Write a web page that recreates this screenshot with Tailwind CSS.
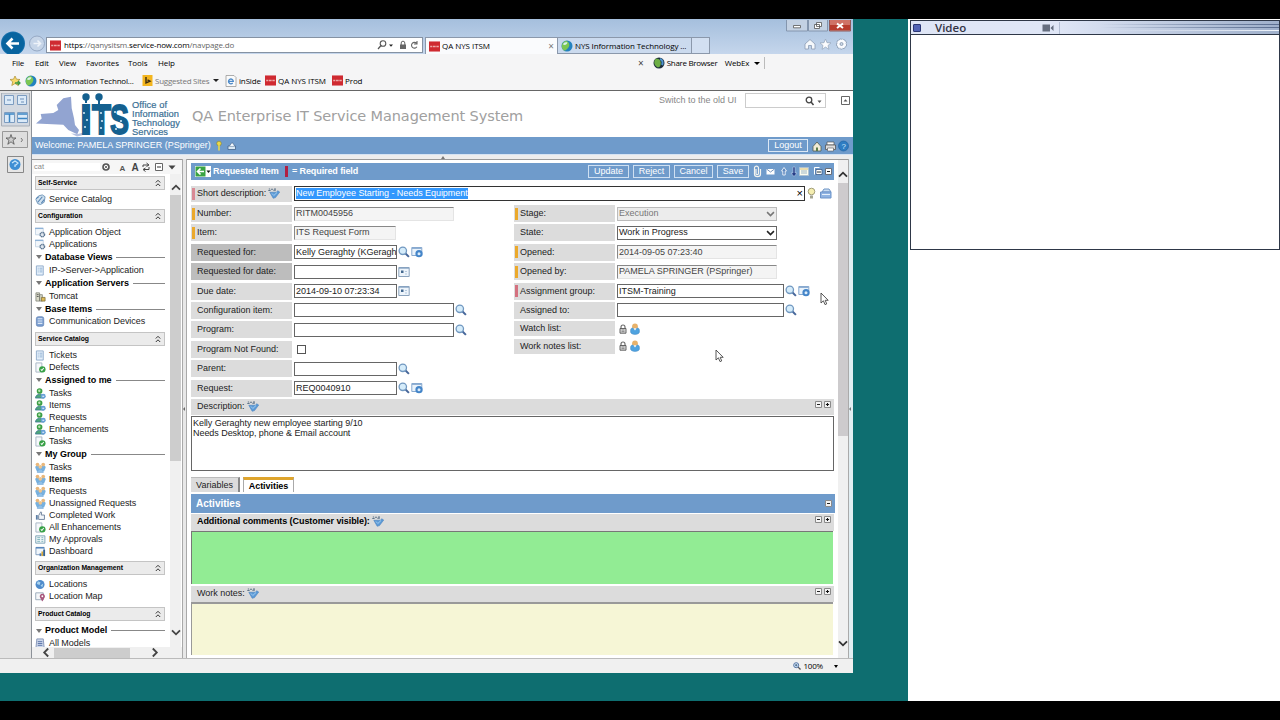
<!DOCTYPE html>
<html lang="en">
<head>
  <meta charset="UTF-8" />
  <meta name="viewport" content="width=device-width, initial-scale=1.0" />
  <title>QA NYS ITSM</title>
  <script src="https://cdn.jsdelivr.net/npm/@tailwindcss/browser@4"></script>
</head>
<body class="w-[1280px] h-[720px] overflow-hidden bg-black font-['Liberation_Sans',sans-serif] text-[9px] leading-none text-[#222]">

  <!-- icon sprite -->
  <svg class="hidden">
    <symbol id="mag" viewBox="0 0 12 12"><path d="M7.3 7.3l3.6 3.6" stroke="#47679a" stroke-width="2"/><circle cx="4.8" cy="4.8" r="3.7" fill="#d5ecfa" stroke="#7198c0" stroke-width="1.3"/></symbol>
    <symbol id="ref" viewBox="0 0 12 12"><path d="M.8 1.5h10v8H.8z" fill="#eaf3fb" stroke="#87a9cf"/><path d="M1 2.2h9.6" stroke="#87a9cf" stroke-width="1.4"/><circle cx="8" cy="7.7" r="3.6" fill="#4485c9"/><circle cx="8" cy="7.7" r="1.5" fill="#dcecfa"/></symbol>
    <symbol id="cal" viewBox="0 0 12 11"><path d="M.8 1h10.4v9H.8z" fill="#edf4fb" stroke="#8ba3bd"/><path d="M1 1.5h10" stroke="#86a2c2" stroke-width="1.4"/><path d="M3 4h2.5v2.5H3z" fill="#43688f"/><path d="M7 5h2M7 7.5h2" stroke="#b4c8dd"/></symbol>
    <symbol id="lock" viewBox="0 0 8 10"><path d="M2 4.5V3a2 2 0 0 1 4 0v1.5" fill="none" stroke="#666" stroke-width="1.1"/><path d="M1 4.5h6v4.7H1z" fill="#ddd" stroke="#555" stroke-width=".9"/><path d="M2.5 6h3M2.5 7.6h3" stroke="#666" stroke-width=".7"/></symbol>
    <symbol id="user" viewBox="0 0 10 12"><circle cx="5" cy="3.4" r="2.900" fill="#e8b26a"/><path d="M.6 7.2C.6 5.400 2 4.800 3 5l2 2 2-2c1-.2 2.400.4 2.400 2.200v1.800c0 3.200-8.800 3.200-8.800 0z" fill="#4fa3e0" stroke="#3f86c0" stroke-width=".5"/><path d="M3.400 5.300L5 7.600l1.600-2.300z" fill="#eef6fc"/></symbol>
    <symbol id="spell" viewBox="0 0 12 11"><path d="M.3 2.500h2.300M2.800 1.300h2.200M5.300 2.300h2.500M.8 1h1.200M6 1h2" stroke="#5f7489" stroke-width="1.100"/><path d="M1.800 4.300L5.200 10.300 7.500 9.600 11.700 4 9.800 2.800 8.300 4.200z" fill="#5b9ad6" stroke="#4a83c0" stroke-width=".6"/><path d="M4 5.500l1.800 2L9 4.500" fill="none" stroke="#a9d0f0" stroke-width=".9"/></symbol>
    <symbol id="globe" viewBox="0 0 12 12"><circle cx="6" cy="6" r="5.500" fill="#2382bf"/><path d="M5 .8C9 2 9 6 7 8s-3 2.800-4 2.500C-.5 8 0 2.500 5 .8z" fill="#7cc653"/><path d="M2 4.500C2.500 2.500 4.500 1.800 6.500 2.500 6 4.500 4 5.500 2 4.500z" fill="#d9f2ea"/></symbol>
    <symbol id="up2" viewBox="0 0 6 8"><path d="M.8 3.500L3 1.300l2.200 2.200M.8 7L3 4.800 5.200 7" fill="none" stroke="#333" stroke-width="1"/></symbol>
    <symbol id="min" viewBox="0 0 7 7"><path d="M.5.5h6v6h-6z" fill="#f4f4f4" stroke="#8a8a8a"/><path d="M2 3.500h3" stroke="#222"/></symbol>
    <symbol id="plus" viewBox="0 0 7 7"><path d="M.5.5h6v6h-6z" fill="#f4f4f4" stroke="#8a8a8a"/><path d="M1.900 3.500h3.200M3.500 1.900v3.200" stroke="#111" stroke-width="1.100"/></symbol>
    <symbol id="chev" viewBox="0 0 10 7"><path d="M1 1.300l4 4 4-4" fill="none" stroke="currentColor" stroke-width="1.800"/></symbol>
    <symbol id="cursor" viewBox="0 0 9 14"><path d="M1 1v10l2.400-2.200L5 12.600l1.700-.7L5.200 8.300h3z" fill="#fff" stroke="#444" stroke-width=".9"/></symbol>
    <!-- navigator icons -->
    <symbol id="n-catalog" viewBox="0 0 12 12"><path d="M1 6l3-4 4-1 3 2-1 6-4 2.500-3-1z" fill="#cfe0ee" stroke="#6d94b8"/><path d="M3 9l5-6M1 5l3-2M7 10l3-4" stroke="#5583b3" stroke-width="1.200"/></symbol>
    <symbol id="n-app" viewBox="0 0 12 12"><path d="M.5 1.500h8.500v7H.5z" fill="#f2f6fa" stroke="#c3d2e2"/><path d="M0 1.500h9" stroke="#8fb3d8" stroke-width="1.500"/><circle cx="8" cy="8.300" r="2.400" fill="#dfe6ee" stroke="#5e7893" stroke-width="1.600" stroke-dasharray="1.400 .4"/></symbol>
    <symbol id="n-doc" viewBox="0 0 12 12"><path d="M1.500 1h7.500v10H1.500z" fill="#e4effa" stroke="#8eabca"/><path d="M3 3.500h1M5 3.500h3M3 5.500h1M5 5.500h3M3 7.500h1M5 7.500h3" stroke="#8fb0d2"/></symbol>
    <symbol id="n-server" viewBox="0 0 12 12"><path d="M1 2h4v9H1zM5 4h3v7H5z" fill="#d8d9c8" stroke="#777b70" stroke-width=".8"/><path d="M7 7h4v4H7z" fill="#dcb955" stroke="#7b6c3a" stroke-width=".8"/><path d="M2 4h2M2 6h2" stroke="#555"/></symbol>
    <symbol id="n-comm" viewBox="0 0 12 12"><rect x="1.500" y=".8" width="8" height="10.400" rx="2" fill="#7d9fd0" stroke="#5d7fb2" stroke-width=".8"/><path d="M3 3h5M3 5.500h5M3 8h5" stroke="#dce8f5" stroke-width="1.200"/></symbol>
    <symbol id="n-check" viewBox="0 0 12 12"><path d="M1 1h6.500v10H1z" fill="#f6f8fa" stroke="#a5b4c3"/><circle cx="8" cy="8" r="3.500" fill="#37a046"/><path d="M6.300 8l1.200 1.200 2-2.600" fill="none" stroke="#fff" stroke-width="1.100"/></symbol>
    <symbol id="n-person" viewBox="0 0 12 12"><circle cx="5" cy="3.300" r="3.100" fill="#3c9f46"/><path d="M.5 11c0-5.500 9-5.500 9 0z" fill="#4da67a" stroke="#3b7393" stroke-width=".8"/><circle cx="9" cy="9" r="2.700" fill="#67a0d7"/><path d="M8 9h2" stroke="#fff"/><circle cx="4.700" cy="3" r="1.300" fill="#b9e2b4"/></symbol>
    <symbol id="n-group" viewBox="0 0 12 12"><path d="M.3 6c0-3 5-2.500 5.500 0 .5-2.500 5.800-3 5.800 0L10 10H2z" fill="#77b1df"/><circle cx="2.700" cy="2.800" r="2" fill="#e9b77b"/><circle cx="9" cy="2.800" r="2" fill="#e9b77b"/><path d="M2.500 11.500c0-5 6.600-5 6.600 0z" fill="#8fc0e8" stroke="#5f98cc" stroke-width=".5"/><circle cx="5.800" cy="5.300" r="2" fill="#efc48d"/></symbol>
    <symbol id="n-thumb" viewBox="0 0 12 12"><path d="M1 5.500h2v5H1z" fill="#5d7fa6"/><path d="M4 10.300V6l2.300-4 1 .7L6.800 5.500h3.500v4.800z" fill="#f3f6fa" stroke="#5d7390" stroke-width=".9"/></symbol>
    <symbol id="n-form" viewBox="0 0 12 12"><path d="M.8 2h10v8H.8z" fill="#eef5f7" stroke="#7ba0b5"/><path d="M2.500 4h3M7 4h2M2.500 6h3M7 6h2M2.500 8h3M7 8h2" stroke="#7bb2ba"/></symbol>
    <symbol id="n-dash" viewBox="0 0 12 12"><path d="M1 1.500h9v8H1z" fill="#f1f6fb" stroke="#7f9cbd"/><path d="M1 2h9" stroke="#4f81ba" stroke-width="1.500"/><path d="M5 8h2v3H5z" fill="#4a77b8"/><path d="M7 6h2v5H7z" fill="#d7a93b"/><path d="M9 4h2v7H9z" fill="#326194"/></symbol>
    <symbol id="n-globe" viewBox="0 0 12 12"><circle cx="5.500" cy="6" r="4.900" fill="#4f8bcb"/><path d="M3 2.500l3 1-1 3-3-1zM6 7l3-2-1 4z" fill="#a9d3ee"/></symbol>
    <symbol id="n-map" viewBox="0 0 12 12"><path d="M.8 2H9v7.500H.8z" fill="#f5f7f9" stroke="#97a7b8"/><path d="M8 11.500L5.500 7a2.800 2.800 0 1 1 5 0z" fill="#a8577d"/><circle cx="8" cy="5.700" r="1" fill="#fff"/></symbol>
    <symbol id="n-model" viewBox="0 0 12 12"><path d="M2 1h7l1 10H1z" fill="#cdd7ea" stroke="#8494b6"/><path d="M3 4h5M3 6h5M3 8h5" stroke="#5671a6"/></symbol>
    <symbol id="chip" viewBox="0 0 12 12"><path d="M0 .5h12v11H0z" fill="#cf2a31"/><path d="M1.300 6h2.300M4.300 6h3M8 6h2.700" stroke="#eda9a9" stroke-width="1.800"/></symbol>
  </svg>

  <div class="flex h-[720px] flex-col py-[19px]">
    <div class="flex h-[682px]">

      <!-- shared desktop -->
      <div class="w-[908px] bg-[#0e6e70]">
        <div class="flex h-[654px] w-[853px] flex-col bg-[#f0f0f0] font-['Open_Sans',sans-serif] text-[8px]">

          <!-- title bar and tabs -->
          <div class="flex h-[35px] items-end bg-linear-to-b from-[#a5bfdd] to-[#c5d6ec]">
            <svg class="h-[26px] w-[46px]" viewBox="0 0 46 26"><circle cx="13" cy="15.500" r="12" fill="#1670ad"/><circle cx="13" cy="15.500" r="11" fill="#08649f"/><path d="M19 15.500H8M12.500 10.500l-5 5 5 5" fill="none" stroke="#fff" stroke-width="2.600"/><circle cx="37" cy="15.500" r="7.500" fill="#c6d5e8" stroke="#96a9c4"/><path d="M33.500 15.500h6.500M37.500 12.500l3 3-3 3" fill="none" stroke="#eef3f9" stroke-width="1.600"/></svg>
            <div class="mb-px flex h-[16px] w-[377px] items-center border border-[#8592a3] bg-white pl-[3px]">
              <svg class="size-[11px]"><use href="#chip"/></svg>
              <span class="ml-[3px] tracking-[-0.14px] whitespace-nowrap text-[#666]"><span class="text-black">https</span>://qanysitsm.<span class="text-black">service-now.com</span>/navpage.do</span>
              <svg class="mr-[3px] ml-auto h-[12px] w-[42px]" viewBox="0 0 42 12"><circle cx="6" cy="4.500" r="2.800" fill="none" stroke="#555" stroke-width="1.100"/><path d="M4 6.500L1 10" stroke="#555" stroke-width="1.200"/><path d="M12 5.500h4l-2 2.200z" fill="#222"/><path d="M23 5.500h6V10h-6z" fill="#666"/><path d="M24.200 6V4a1.800 1.800 0 0 1 3.600 0v2" fill="none" stroke="#666"/><path d="M39.500 4.200a2.900 2.900 0 1 0 .4 3.600M40 2v3h-3" fill="none" stroke="#666" stroke-width="1.100"/></svg>
            </div>
            <div class="ml-[2px] flex h-[17px] w-[133px] items-center border border-b-0 border-[#8b98ab] bg-[#fafbfd] pl-[3px] text-black">
              <svg class="size-[11px]"><use href="#chip"/></svg>
              <span class="ml-[2px] tracking-[-0.05px]">QA NYS ITSM</span>
              <span class="mr-[3px] ml-auto text-[10px] text-[#777]">×</span>
            </div>
            <div class="flex h-[17px] w-[134px] items-center border border-l-0 border-[#8b98ab] bg-[#cbdaee] pl-[3px] text-black">
              <svg class="size-[12px]"><use href="#globe"/></svg>
              <span class="ml-[2px] tracking-[-0.1px] whitespace-nowrap">NYS Information Technology ...</span>
            </div>
            <div class="h-[17px] w-[18px] border border-l-0 border-[#8b98ab] bg-[#d2dff1]"></div>
            <div class="ml-auto flex h-[35px] flex-col items-end justify-between">
              <svg class="mt-px h-[12px] w-[67px]" viewBox="0 0 67 12"><path d="M.5-2h21v13H.5z" fill="#c3d1e3" stroke="#8496ae"/><path d="M22.500-2h19v13h-19z" fill="#c3d1e3" stroke="#8496ae"/><path d="M43.500-2h21v13h-21z" fill="#cf7266" stroke="#8e5a5a"/><path d="M44 5h20v5H44z" fill="#b83c2e"/><path d="M7.500 5.500h7v2.300h-7z" fill="#fff" stroke="#555" stroke-width=".8"/><path d="M30.500 2.500h5v4h-5zM28.500 4.500h5v4h-5z" fill="#fff" stroke="#555" stroke-width=".8"/><path d="M51 3.500l6 4.500M57 3.500L51 8" stroke="#fff" stroke-width="2"/></svg>
              <svg class="mr-[5px] mb-[4px] h-[12px] w-[44px]" viewBox="0 0 44 12"><path d="M1 6l5-4.500L11 6v5H7.500V7.500h-3V11H1z" fill="#f5f8fb" stroke="#8a9bb2" stroke-width=".8"/><path d="M21.500 1l1.500 3.700 4 .2-3 2.600 1 3.800-3.500-2.200-3.500 2.200 1-3.800-3-2.600 4-.2z" fill="#fbfcfe" stroke="#93a3b8" stroke-width=".7"/><circle cx="37.500" cy="6" r="4" fill="#cbd8e8" stroke="#8494aa" stroke-width="2.800" stroke-dasharray="2.100 .6"/><circle cx="37.500" cy="6" r="4" fill="#fafcff" stroke="#fafcff" stroke-width="1.400" stroke-dasharray="1.900 .8"/><circle cx="37.500" cy="6" r="1.500" fill="#cbd8e8" stroke="#8494aa" stroke-width=".8"/></svg>
            </div>
          </div>

          <!-- menu and favorites -->
          <div class="flex h-[37px] flex-col border-b border-[#666] bg-[#f5f5f6] text-black">
            <div class="flex h-[18px] items-center whitespace-nowrap">
              <div class="flex w-[638px] pl-[12px] tracking-[-0.1px]">
                <span class="w-[23px]">File</span><span class="w-[24px]">Edit</span><span class="w-[27px]">View</span><span class="w-[42px]">Favorites</span><span class="w-[30px]">Tools</span><span>Help</span>
              </div>
              <span class="text-[10px] text-[#444]">×</span>
              <svg class="ml-[9px] size-[12px]" viewBox="0 0 12 12"><circle cx="6" cy="6" r="5.500" fill="#1c2d3c"/><path d="M3 1.500c4 0 6 3 4 8l-2 1C1 9 0 4 3 1.500z" fill="#6dae45"/><path d="M7 2c3 1 3 4 2 6" stroke="#4d93cf" stroke-width="2" fill="none"/></svg>
              <span class="ml-[2px] w-[58px] tracking-[-0.3px]">Share Browser</span>
              <span class="tracking-[-0.2px]">WebEx</span>
              <span class="ml-[5px] border-x-[3px] border-t-[3px] border-x-transparent border-t-black"></span>
              <span class="ml-[4px] h-[12px] w-px bg-[#bbb]"></span>
            </div>
            <div class="flex h-[17px] items-center whitespace-nowrap">
              <svg class="ml-[9px] size-[12px]" viewBox="0 0 12 12"><path d="M6 1l1.500 3.200 3.500.3-2.700 2.300.9 3.700L6 8.500l-3.200 2 .9-3.700L1 4.500l3.500-.3z" fill="#f8d96b" stroke="#a98c30" stroke-width=".7"/><path d="M6 8h5M9 6l2 2-2 2" stroke="#3d9942" stroke-width="1.300" fill="none"/></svg>
              <svg class="ml-[4px] size-[12px]"><use href="#globe"/></svg>
              <span class="ml-[2px] w-[103px] tracking-[-0.17px]">NYS Information Technol...</span>
              <svg class="size-[11px]" viewBox="0 0 11 11"><path d="M.5 0h10v11H.5z" fill="#f3b51e"/><path d="M4 2v6l4-1.800L5.500 4.800" stroke="#3c2c10" stroke-width="1.400" fill="none"/></svg>
              <span class="ml-[2px] w-[58px] tracking-[-0.25px] text-[#777]">Suggested Sites</span>
              <span class="border-x-[3px] border-t-[3px] border-x-transparent border-t-[#222]"></span>
              <svg class="ml-[6px] size-[12px]" viewBox="0 0 12 12"><path d="M1 .5h8l2 2v9H1z" fill="#fafafa" stroke="#999" stroke-width=".8"/><path d="M3.500 6.300h4.800A2.400 2.400 0 1 0 7.700 8" fill="none" stroke="#4c89c9" stroke-width="1.300"/></svg>
              <span class="ml-[2px] w-[26px] tracking-[-0.15px]">inSide</span>
              <svg class="size-[11px]"><use href="#chip"/></svg>
              <span class="ml-[2px] w-[54px] tracking-[-0.05px]">QA NYS ITSM</span>
              <svg class="size-[11px]"><use href="#chip"/></svg>
              <span class="ml-[2px] tracking-[-0.1px]">Prod</span>
            </div>
          </div>

          <div class="flex h-[567px] font-['Liberation_Sans',sans-serif] text-[9px]">
            <!-- side command bar -->
            <div class="w-[32px] border-r border-[#8d9299] bg-[#e4e4e4] pt-[2px]">
              <svg class="h-[86px] w-[31px]" viewBox="0 0 31 86"><path d="M1.500 0h28v33h-28z" fill="#d3d9e1" stroke="#a6adb6"/><g fill="#dbeaf8" stroke="#7c9cc0"><path d="M4.500 2.500h9v9h-9zM17.500 2.500h9v9h-9zM4.500 19.500h10v10h-10zM17.500 19.500h10v10h-10z"/></g><path d="M7 7h4M20 6h4M21 9h3" stroke="#6d8fb8"/><path d="M5 21h9M9.500 21v8M18 21h9M18 25.500h9" stroke="#3c86c4" stroke-width="1.500"/><path d="M2.500 38.500h25v16h-25z" fill="#dedede" stroke="#999"/><path d="M11 41.500l1.200 3.500h3.800l-3 2.300 1.200 4-3.200-2.500L7.800 51.300l1.200-4L6 45h3.800z" fill="#ccc" stroke="#444" stroke-width=".7"/><path d="M21 45l1.500 2-1.500 2" fill="none" stroke="#777"/><path d="M7.500 63.500h16v16h-16z" fill="#e6e6e6" stroke="#888"/><circle cx="15" cy="71.500" r="5.500" fill="#3f8fd4"/><path d="M12 70l3-2 3 2-2 2h-1v2" stroke="#cde8fb" stroke-width="1.200" fill="none"/></svg>
            </div>

            <!-- web page -->
            <div class="flex w-[821px] flex-col">
              <div class="flex h-[46px] bg-white">
                <svg class="h-[46px] w-[150px] overflow-visible" viewBox="0 0 150 46"><path d="M4 32.500L9.700 27.500 8.700 23 21.300 22 26.300 19 24.700 14 31.300 7.300 39 5.700 39.700 17.300 42 27.300 43 34 47 39 45.300 43.300 36.300 39 31.300 33.800z" fill="#92a4d1"/><path d="M39 42.500l7 .5 11-3-2 3-10 2.500z" fill="#b3c0e0"/><g font-family="Liberation Sans" font-weight="700" font-size="43" fill="#14608f" stroke="#14608f" stroke-width="1.800"><text x="48" y="42.500">I</text><text x="60" y="42.500" textLength="19" lengthAdjust="spacingAndGlyphs">T</text><text x="78" y="42.500" textLength="19" lengthAdjust="spacingAndGlyphs">S</text></g><circle cx="54" cy="6" r="3.700" fill="#14608f"/><circle cx="67" cy="6" r="3.700" fill="#14608f"/><path d="M67 6v8M54 6v6" stroke="#14608f" stroke-width="2"/><g fill="#cfe5f2"><circle cx="52" cy="22" r="1.100"/><circle cx="55" cy="29" r="1.100"/><circle cx="53" cy="36" r="1.100"/><circle cx="69" cy="22" r="1.100"/><circle cx="70" cy="30" r="1.100"/><circle cx="69" cy="37" r="1.100"/><circle cx="83" cy="21" r="1.100"/><circle cx="89" cy="30" r="1.100"/><circle cx="84" cy="38" r="1.100"/></g><g font-family="Liberation Sans" font-size="9.300" fill="#3a6f95" stroke="#3a6f95" stroke-width=".2"><text x="100" y="16.500" textLength="35">Office of</text><text x="100" y="25.500" textLength="47">Information</text><text x="100" y="34.500" textLength="48">Technology</text><text x="100" y="43.500" textLength="36">Services</text></g></svg>
                <h1 class="mt-[18px] ml-[10px] w-[400px] font-['DejaVu_Sans',sans-serif] text-[14.5px] tracking-[-0.1px] whitespace-nowrap text-[#a0a0a0]">QA Enterprise IT Service Management System</h1>
                <span class="mt-[5px] ml-[67px] w-[86px] whitespace-nowrap text-[#888]">Switch to the old UI</span>
                <div class="mt-[2px] flex h-[15px] w-[81px] items-center justify-end border border-[#ccc]">
                  <svg class="h-[10px] w-[22px]" viewBox="0 0 22 10"><circle cx="6" cy="4" r="2.800" fill="none" stroke="#444" stroke-width="1.300"/><path d="M8 6l2.500 3" stroke="#444" stroke-width="1.500"/><path d="M14.500 4.500h4l-2 2.500z" fill="#555"/></svg>
                </div>
                <svg class="mt-[5px] ml-[15px] size-[9px]" viewBox="0 0 9 9"><path d="M.5.5h8v8h-8z" fill="#fff" stroke="#666"/><path d="M2.500 5.500h4l-2-2.300z" fill="#555"/></svg>
              </div>

              <div class="flex h-[17px] items-center bg-[#6f9bcb] pl-[3px] text-white">
                <span class="whitespace-nowrap">Welcome: PAMELA SPRINGER (PSpringer)</span>
                <svg class="ml-[5px] h-[11px] w-[24px]" viewBox="0 0 24 11"><circle cx="3" cy="3.500" r="2.300" fill="#ead94c" stroke="#8d7f2a" stroke-width=".6"/><path d="M3 4v6.500" stroke="#ead94c" stroke-width="1.600"/><path d="M12 6h7.500v3.500H12z" fill="#d9e8f4" stroke="#42638c" stroke-width=".8"/><path d="M13.500 6l2-3h1.500l1.500 3" fill="#f0f6fb" stroke="#42638c" stroke-width=".6"/></svg>
                <span class="ml-auto flex h-[13px] w-[40px] items-center justify-center border border-[#dce8f5] text-[9px]">Logout</span>
                <svg class="mr-[4px] ml-[4px] h-[12px] w-[37px]" viewBox="0 0 37 12"><path d="M1 6.500L5 2l4 4.500V11H1z" fill="#f1ecd6" stroke="#515b50" stroke-width=".8"/><path d="M4 7.500h2V11H4z" fill="#5a7b49"/><path d="M15 2h7v3h-7z" fill="#fff" stroke="#555" stroke-width=".7"/><path d="M13.500 5h10v4.500h-10z" fill="#ddd" stroke="#555" stroke-width=".8"/><path d="M15.500 8h6v3h-6z" fill="#fff" stroke="#555" stroke-width=".6"/><circle cx="31.500" cy="6" r="5" fill="#2e7cc2" stroke="#1c5f9f" stroke-width=".6"/><text x="29.500" y="9" font-size="8" fill="#cfe8fb" font-family="Liberation Sans">?</text></svg>
              </div>
              <div class="flex h-[5px] justify-center border-t border-[#d5e3f3] bg-[#ededed]"><span class="mt-[1px] border-x-[2px] border-b-[3px] border-x-transparent border-b-[#777]"></span></div>

              <div class="flex h-[499px]">
                <!-- navigator -->
                <div class="flex w-[150px] flex-col border-t border-[#9a9a9a] bg-white">
                  <div class="flex h-[14px] items-center bg-[#f6f6f6] pl-[2px]">
                    <span class="w-[66px] bg-white text-[7.5px] text-[#888]">cat</span>
                    <svg class="h-[12px] w-[78px]" viewBox="0 0 78 12"><circle cx="6" cy="6" r="3" fill="none" stroke="#555" stroke-width="1.600"/><path d="M4.500 4.500l3 3M7.500 4.500l-3 3" stroke="#555" stroke-width=".8"/><text x="19.500" y="10" font-size="8" font-weight="700" fill="#555" font-family="Liberation Sans">A</text><text x="31.500" y="10" font-size="10" font-weight="700" fill="#444" font-family="Liberation Sans">A</text><path d="M43 6V4h5M46.500 2L49 4l-2.500 1.500M49 6v2.500h-5M45.500 7L43 8.500l2.500 2" fill="none" stroke="#444"/><path d="M55.500 2.500h7v7h-7z" fill="#fff" stroke="#666"/><path d="M57 6h4" stroke="#333"/><path d="M68.500 4.500h7l-3.500 4z" fill="#444"/></svg>
                  </div>
                  <div class="flex h-[473px]">
                    <div id="nav" class="w-[138px] overflow-hidden pt-[2px] pl-[3px] pr-[5px] whitespace-nowrap"></div>
                    <div class="flex w-[11px] flex-col items-center bg-[#f0f0f0] text-[#444]">
                      <svg class="mt-[10px] h-[7px] w-[10px] rotate-180"><use href="#chev"/></svg>
                      <div class="mt-[4px] h-[266px] w-full bg-[#cdcdcd]"></div>
                      <svg class="mt-auto mb-[11px] h-[7px] w-[10px]"><use href="#chev"/></svg>
                    </div>
                  </div>
                  <div class="flex h-[11px] items-center bg-[#f0f0f0] text-[#444]">
                    <svg class="ml-[9px] h-[7px] w-[10px] rotate-90"><use href="#chev"/></svg>
                    <div class="ml-[3px] h-[10px] w-[76px] bg-[#cdcdcd]"></div>
                    <svg class="ml-[20px] h-[7px] w-[10px] -rotate-90"><use href="#chev"/></svg>
                  </div>
                </div>

                <!-- splitter -->
                <div class="flex w-[5px] items-center border-x border-[#a9a9a9] bg-[#e8e8e8]"><span class="border-y-[2px] border-r-[2px] border-y-transparent border-r-[#666]"></span></div>

                <!-- form -->
                <div class="w-[651px] border-t border-[#9a9a9a] bg-white pt-[3px] pl-[4px]">
                  <div class="flex h-[17px] w-[643px] items-center bg-[#6f9bcb] pl-[4px] text-[9px] font-bold text-white">
                    <svg class="h-[11px] w-[16px]" viewBox="0 0 16 11"><path d="M0 0h16v11H0z" fill="#fff"/><path d="M.5.5h10v10H.5z" fill="#39a243"/><path d="M9 5.500H3M5.500 2.500l-3 3 3 3" stroke="#fff" stroke-width="1.700" fill="none"/><path d="M11.500 4.500h4l-2 2.500z" fill="#111"/></svg>
                    <span class="ml-[2px] w-[72px] tracking-[-0.1px]">Requested Item</span>
                    <span class="h-[11px] w-[3px] bg-[#b12043]"></span>
                    <span class="ml-[4px] tracking-[-0.1px]">= Required field</span>
                    <div class="ml-auto flex items-center gap-[4px] text-[9px] font-normal">
                      <span class="flex h-[13px] w-[41px] items-center justify-center border border-[#cfe0f2]">Update</span>
                      <span class="flex h-[13px] w-[37px] items-center justify-center border border-[#cfe0f2]">Reject</span>
                      <span class="flex h-[13px] w-[39px] items-center justify-center border border-[#cfe0f2]">Cancel</span>
                      <span class="flex h-[13px] w-[32px] items-center justify-center border border-[#cfe0f2]">Save</span>
                    </div>
                    <svg class="ml-[2px] h-[13px] w-[83px]" viewBox="0 0 83 13"><path d="M5 4v4.500c0 1.500 2.500 1.500 2.500 0V3c0-2.500-4-2.500-4 0v6c0 3.500 6 3.500 6 0V4" fill="none" stroke="#f4f4ef" stroke-width="1.200"/><path d="M15.500 4h8v5.500h-8z" fill="#fff"/><path d="M15.500 4l4 3 4-3" fill="none" stroke="#7795bb"/><path d="M33 2.500L30.500 6h1.300v4h2.400V6h1.300z" fill="#5d87bf" stroke="#fff" stroke-width=".8"/><path d="M43 11.500L40 8h2V2h2v6h2z" fill="#253d87" stroke="#c8d8ee" stroke-width=".5"/><path d="M48.500 2.500h9v8h-9z" fill="#fbfbee" stroke="#adc1d2"/><path d="M49 4h8" stroke="#d9bf70"/><path d="M50 6h6M50 8h6" stroke="#9cb6c8"/><path d="M63.500 2.500h5M63.500 2.500v7" stroke="#fff"/><path d="M65 4.500h6v5h-6z" fill="#fff" stroke="#2f4f7d" stroke-width=".7"/><path d="M66 7h4" stroke="#233"/><path d="M74.500 3.500h6v6h-6z" fill="#fff" stroke="#6c6f78"/><path d="M76 6.500h3" stroke="#111"/></svg>
                  </div>

                  <!-- short description -->
                  <div class="mt-[5px] flex h-[17px] items-center">
                    <div class="mr-[2px] flex h-[16px] w-[101px] items-center bg-[#dcdcdc] pl-px"><span class="h-[12px] w-[3px] bg-[#d98a95]"></span><span class="ml-[2px] tracking-[-0.05px]">Short description:</span><svg class="ml-[2px] h-[11px] w-[12px]"><use href="#spell"/></svg></div>
                    <div class="flex h-[15px] w-[511px] items-center justify-between border border-[#333] px-[1px]"><span class="bg-[#3297fd] py-[1px] text-white tracking-[-0.05px]">New Employee Starting - Needs Equipment</span><span class="text-[11px] text-black">×</span></div>
                    <svg class="ml-[2px] h-[13px] w-[26px]" viewBox="0 0 26 13"><circle cx="4.500" cy="4.500" r="3.300" fill="#f5eeb0" stroke="#98946e" stroke-width=".9"/><path d="M3 8.500h3v3H3z" fill="#a5a590"/><path d="M15 5l2-3h5l2 3z" fill="#c8dcf2" stroke="#6f94c4"/><path d="M13.500 5h10.500v6H13.500z" fill="#8fb3e2" stroke="#6c94ca"/><path d="M15 7.500h8" stroke="#e5f0fb"/></svg>
                  </div>

                  <div class="mt-[3px] flex h-[194px]">
                    <div id="left" class="flex w-[323px] flex-col gap-[2.4px]"></div>
                    <div id="right" class="flex flex-col gap-[2.4px]"></div>
                  </div>

                  <!-- description -->
                  <div class="flex h-[16px] w-[643px] items-center bg-[#dcdcdc] pb-px pl-[6px]"><span>Description:</span><svg class="ml-[2px] h-[11px] w-[12px]"><use href="#spell"/></svg><svg class="mr-[2px] mb-[4px] ml-auto size-[7px]"><use href="#min"/></svg><svg class="mr-[3px] mb-[4px] size-[7px]"><use href="#plus"/></svg></div>
                  <div class="mt-px h-[55px] w-[643px] border border-[#666] pt-px pl-px leading-[10px] tracking-[-0.05px]">Kelly Geraghty new employee starting 9/10<br>Needs Desktop, phone &amp; Email account</div>

                  <!-- tabs -->
                  <div class="mt-[6px] flex h-[15px] items-end gap-[3px]">
                    <span class="flex h-[15px] w-[49px] items-center justify-center border-t border-r-2 border-t-[#bbb] border-r-[#888] bg-[#dcdcdc] pt-px">Variables</span>
                    <span class="flex h-[15px] w-[51px] items-center justify-center border-x border-t-[3px] border-x-[#aaa] border-t-[#dfa52d] bg-white font-bold tracking-[-0.05px] text-black">Activities</span>
                  </div>
                  <div class="mt-[2px] flex h-[19px] w-[644px] items-center justify-between bg-[#6f9bcb] pr-[3px] pl-[5px] text-[10px] font-bold text-white"><span>Activities</span><svg class="size-[7px]"><use href="#min"/></svg></div>
                  <div class="mt-px flex h-[17px] w-[643px] items-center bg-[#dcdcdc] pb-[2px] pl-[6px]"><span class="font-bold tracking-[-0.07px] text-black">Additional comments (Customer visible):</span><svg class="ml-[2px] h-[11px] w-[12px]"><use href="#spell"/></svg><svg class="mr-[2px] mb-[4px] ml-auto size-[7px]"><use href="#min"/></svg><svg class="mr-[3px] mb-[4px] size-[7px]"><use href="#plus"/></svg></div>
                  <div class="h-[53px] w-[642px] border-t border-l border-[#777] bg-[#92ec94]"></div>
                  <div class="mt-[2px] flex h-[16px] w-[643px] items-center bg-[#dcdcdc] pb-px pl-[6px]"><span>Work notes:</span><svg class="ml-[2px] h-[11px] w-[12px]"><use href="#spell"/></svg><svg class="mr-[2px] mb-[4px] ml-auto size-[7px]"><use href="#min"/></svg><svg class="mr-[3px] mb-[4px] size-[7px]"><use href="#plus"/></svg></div>
                  <div class="h-[53px] w-[642px] border-t-2 border-l border-[#999] bg-[#f6f6d6]"></div>
                </div>

                <div class="flex w-[10px] flex-col items-center border-t border-[#9a9a9a] bg-[#f0f0f0] text-[#333]">
                  <svg class="mt-[11px] h-[7px] w-[10px] rotate-180"><use href="#chev"/></svg>
                  <div class="mt-[5px] h-[253px] w-full bg-[#cdcbcd]"></div>
                  <svg class="mt-auto mb-[11px] h-[7px] w-[10px]"><use href="#chev"/></svg>
                </div>
                <div class="flex w-[5px] items-center border-l border-[#aaa] bg-[#e2eef2]"><span class="border-y-[2px] border-r-[2px] border-y-transparent border-r-[#777]"></span></div>
              </div>
            </div>
          </div>

          <!-- status bar -->
          <div class="flex h-[15px] items-center justify-end border-t border-[#bbb] bg-[#f0f0f0] pr-[15px] text-black">
            <svg class="size-[8px]" viewBox="0 0 12 12"><path d="M7.300 7.300l4 4" stroke="#555" stroke-width="2"/><circle cx="4.800" cy="4.800" r="3.800" fill="#cfe2f5" stroke="#47679a" stroke-width="1.300"/><path d="M3 4.800h3.600M4.800 3v3.600" stroke="#246"/></svg>
            <span class="ml-[2px] tracking-[-0.2px]">100%</span>
            <span class="ml-[11px] border-x-[2.5px] border-t-[3px] border-x-transparent border-t-black"></span>
          </div>
        </div>
      </div>

      <!-- video panel -->
      <div class="w-[372px] bg-white pl-[2px]">
        <div class="mt-px h-[230px] border border-[#2e3747]">
          <div class="flex h-[14px] items-center border-b border-[#2e3747] bg-linear-to-r from-[#dfe6f6] from-40% to-[#9fb0cb] pl-[2px]">
            <span class="size-[8px] rounded-[1px] border border-[#2b3775] bg-[#5264b5]"></span>
            <span class="ml-[14px] w-[107px] font-['Open_Sans',sans-serif] text-[11.5px] font-semibold text-[#334]">Video</span>
            <svg class="h-[8px] w-[12px]" viewBox="0 0 12 8"><path d="M.5.500h7.500v7H.5zM8.500 4l3-3v6z" fill="#666f80"/></svg>
            <span class="ml-[5px] h-[12px] w-px bg-[#b4bfd4]"></span>
            <span class="ml-[40px] flex flex-1 flex-col gap-[2px]"><span class="h-px bg-linear-to-r from-transparent to-[#5b6e90]"></span><span class="h-px bg-linear-to-r from-transparent to-[#5b6e90]"></span><span class="h-px bg-linear-to-r from-transparent to-[#eef3fa]"></span></span>
          </div>
        </div>
      </div>
    </div>
  </div>

  <!-- mouse pointers -->
  <svg class="absolute top-[292px] left-[820px] h-[14px] w-[9px]"><use href="#cursor"/></svg>
  <svg class="absolute top-[349px] left-[715px] h-[14px] w-[9px]"><use href="#cursor"/></svg>

  <script>
    // h = section bar, s = sub heading, otherwise an icon id
    const nav = [
      ["h", "Self-Service"], ["n-catalog", "Service Catalog"],
      ["h", "Configuration"], ["n-app", "Application Object"], ["n-app", "Applications"],
      ["s", "Database Views"], ["n-doc", "IP->Server->Application"],
      ["s", "Application Servers"], ["n-server", "Tomcat"],
      ["s", "Base Items"], ["n-comm", "Communication Devices"],
      ["h", "Service Catalog"], ["n-doc", "Tickets"], ["n-check", "Defects"],
      ["s", "Assigned to me"], ["n-person", "Tasks"], ["n-person", "Items"], ["n-person", "Requests"], ["n-person", "Enhancements"], ["n-check", "Tasks"],
      ["s", "My Group"], ["n-group", "Tasks"], ["n-group", "Items", true], ["n-group", "Requests"], ["n-group", "Unassigned Requests"],
      ["n-thumb", "Completed Work"], ["n-check", "All Enhancements"], ["n-form", "My Approvals"], ["n-dash", "Dashboard"],
      ["h", "Organization Management"], ["n-globe", "Locations"], ["n-map", "Location Map"],
      ["h", "Product Catalog"], ["s", "Product Model"], ["n-model", "All Models"]
    ];
    const esc = t => t.replace(/>/g, "&gt;");
    document.getElementById("nav").innerHTML = nav.map(([kind, text, bold]) => {
      if (kind === "h") return `<div class="mt-[4.4px] mb-[3.1px] flex h-[14px] items-center justify-between border border-[#c4c4c4] bg-[#ebebeb] pr-[3px] pl-[2px] text-[6.8px] font-bold text-black first:mt-0"><span>${text}</span><svg class="h-[8px] w-[6px]"><use href="#up2"/></svg></div>`;
      if (kind === "s") return `<div class="flex h-[13.8px] items-center pl-[1px] font-bold text-black"><span class="mr-[3px] border-x-[3px] border-t-[4px] border-x-transparent border-t-[#777]"></span><span class="tracking-[-0.03px]">${text}</span><span class="ml-[4px] h-px flex-1 bg-[#888]"></span></div>`;
      return `<div class="flex h-[12px] items-center"><svg class="mr-[3px] size-[11px]"><use href="#${kind}"/></svg><span class="tracking-[-0.04px] ${bold ? "font-bold" : ""}">${esc(text)}</span></div>`;
    }).join("");

    const marks = { y: "bg-[#eba92c]", r: "bg-[#d4717f]", "": "" };
    const boxes = {
      edit: "border border-[#666] bg-white",
      read: "border border-t-[#888] border-l-[#888] border-r-[#e4e4e4] border-b-[#e4e4e4] bg-[#f4f4f4] text-[#444]",
      pick: "border border-[#666] bg-white",
      dim: "border border-[#bbb] bg-[#ececec] text-[#777]"
    };
    // label, required mark, box kind, box width, value, icons, darker label, row height
    const left = [
      ["Number:", "y", "read", 160, "RITM0045956"],
      ["Item:", "y", "read", 102, "ITS Request Form"],
      ["Requested for:", "", "edit", 103, "Kelly Geraghty (KGeraghty)", ["mag", "ref"], true],
      ["Requested for date:", "", "edit", 103, "", ["cal"], true],
      ["Due date:", "", "edit", 103, "2014-09-10 07:23:34", ["cal"]],
      ["Configuration item:", "", "edit", 160, "", ["mag"]],
      ["Program:", "", "edit", 160, "", ["mag"]],
      ["Program Not Found:", "", "check", 0, ""],
      ["Parent:", "", "edit", 103, "", ["mag"]],
      ["Request:", "", "edit", 103, "REQ0040910", ["mag", "ref"]]
    ];
    const right = [
      ["Stage:", "y", "dim", 160, "Execution"],
      ["State:", "", "pick", 160, "Work in Progress"],
      ["Opened:", "y", "read", 160, "2014-09-05 07:23:40"],
      ["Opened by:", "y", "read", 160, "PAMELA SPRINGER (PSpringer)"],
      ["Assignment group:", "r", "edit", 167, "ITSM-Training", ["mag", "ref"]],
      ["Assigned to:", "", "edit", 167, "", ["mag"]],
      ["Watch list:", "", "list", 0, "", [], false, 15],
      ["Work notes list:", "", "list", 0, "", [], false, 15]
    ];
    const row = ([label, mark, kind, w, value, icons = [], dark, h = 17]) => {
      let field;
      if (kind === "check") field = `<span class="ml-[3px] size-[9px] border border-[#555] bg-white"></span>`;
      else if (kind === "list") field = `<svg class="ml-[2px] h-[10px] w-[8px]"><use href="#lock"/></svg><svg class="ml-[3px] h-[12px] w-[10px]"><use href="#user"/></svg>`;
      else {
        const arrow = kind === "pick" || kind === "dim" ? `<svg class="mr-[1px] ml-auto h-[6px] w-[9px] shrink-0"><use href="#chev"/></svg>` : "";
        field = `<div class="flex h-[14px] items-center overflow-hidden pl-[1px] whitespace-nowrap ${boxes[kind]}" style="width:${w}px"><span>${value}</span>${arrow}</div>`;
      }
      const after = icons.map(i => `<svg class="ml-[1px] h-[12px] w-[12px]"><use href="#${i}"/></svg>`).join(" ");
      return `<div class="flex items-center" style="height:${h}px"><div class="mr-[2px] flex h-full w-[101px] items-center pl-px ${dark ? "bg-[#bdbdbd]" : "bg-[#dcdcdc]"}"><span class="mr-[2px] h-[12px] w-[3px] ${marks[mark]}"></span><span>${label}</span></div>${field}${after}</div>`;
    };
    document.getElementById("left").innerHTML = left.map(row).join("");
    document.getElementById("right").innerHTML = right.map(row).join("");
  </script>
</body>
</html>
